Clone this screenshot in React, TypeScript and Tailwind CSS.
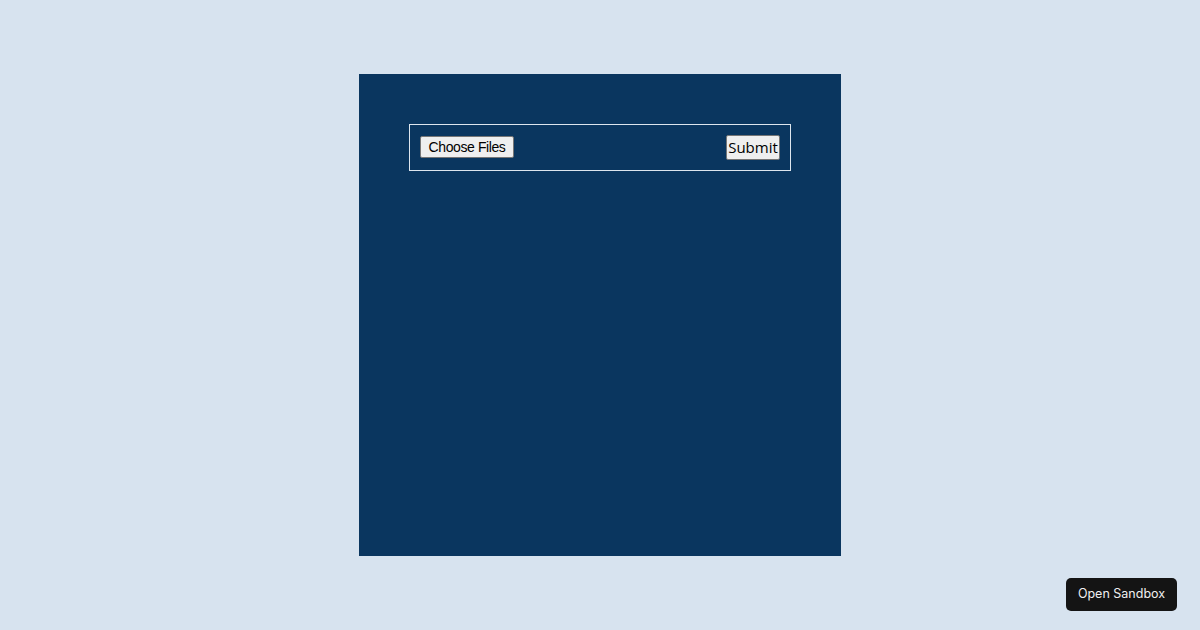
export default function App() {
  return (
    <div className="w-[1200px] h-[630px] bg-[#d7e3ef] relative font-['Liberation_Sans',Arial,sans-serif]">
      <div className="flex justify-center pt-[74px]">
        <div className="w-[482px] h-[482px] bg-[#0a365f] p-[50px]">
          <div className="border border-[#dde6ee] h-[47px] flex items-center justify-between px-[10px]">
            <button className="w-[94px] h-[22px] bg-[#efefef] border border-[#767676] rounded-[2px] text-[14px] tracking-[-0.4px] leading-none text-black -mt-[1px] font-['Liberation_Sans',Arial,sans-serif]">
              Choose Files
            </button>
            <button className="w-[54px] h-[25px] bg-[#efefef] border border-[#767676] rounded-[2px] text-[15px] leading-none text-black font-['Open_Sans',sans-serif]">
              Submit
            </button>
          </div>
        </div>
      </div>
      <button className="absolute left-[1066px] top-[578px] w-[111px] h-[33px] bg-[#141414] rounded-[5px] text-[12.5px] text-[#f0f0f0] font-['Inter',sans-serif]">
        Open Sandbox
      </button>
    </div>
  );
}
